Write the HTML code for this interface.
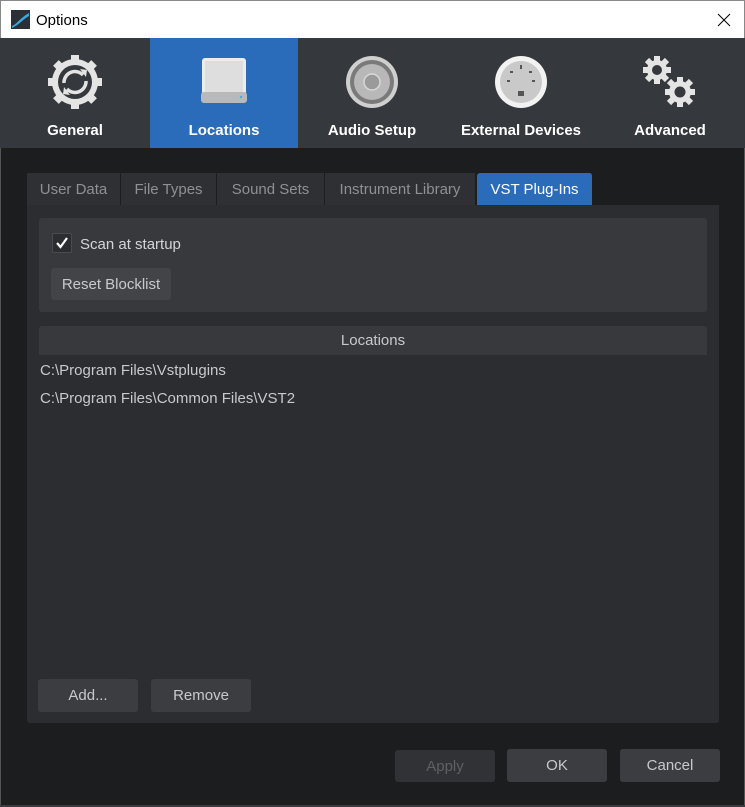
<!DOCTYPE html>
<html><head><meta charset="utf-8"><style>
*{box-sizing:border-box;margin:0;padding:0}
body{width:745px;height:807px;overflow:hidden;background:#1c1d1f;font-family:"Liberation Sans",sans-serif;position:relative}
.abs{position:absolute}
#title{left:0;top:0;width:745px;height:38px;background:#fff;border:1px solid #888;border-bottom:none}
#title span{position:absolute;left:35px;top:11px;font-size:15px;color:#000}
#tb{left:0;top:38px;width:745px;height:110px;background:#35383c}
.tool{position:absolute;top:0;height:110px;width:148px;text-align:center;color:#fff;font-weight:bold;font-size:15px}
.tool .lbl{position:absolute;left:0;right:0;top:84px}
.tool svg{position:absolute;left:50%;transform:translateX(-50%);top:14px}
.tab{position:absolute;top:173px;height:32px;background:#2f3033;color:#8e9094;font-size:15px;line-height:34px;text-align:center;border-right:1px solid #1c1d1f}
#panel{left:27px;top:205px;width:692px;height:518px;background:#2c2d30;border-radius:0 0 3px 3px}
.btn{position:absolute;background:#3c3d41;color:#c8c9cc;font-size:15px;text-align:center;border-radius:3px}
</style></head><body>
<div class="abs" style="left:0;top:0;width:1px;height:807px;background:#555"></div>
<div class="abs" style="right:0;top:0;width:1px;height:807px;background:#555"></div>
<div class="abs" style="left:0;bottom:0;width:745px;height:2px;background:#3a3b3e"></div>
<div id="title" class="abs">
<svg class="abs" style="left:10px;top:9px" width="19" height="19"><rect width="19" height="19" fill="#2b2f36"/><path d="M1 16 C6 14 9 8 18 3 L18 6 C11 10 8 15 1 18Z" fill="#38a9e0"/></svg>
<span>Options</span>
<svg class="abs" style="left:716px;top:12px" width="14" height="14"><path d="M1 1L13 13M13 1L1 13" stroke="#000" stroke-width="1"/></svg>
</div>
<div id="tb" class="abs">
<div class="tool" style="left:1px">
<svg width="60" height="60" viewBox="0 0 60 60"><g fill="#e4e4e4"><circle cx="30" cy="30" r="23"/>
<g><rect x="26" y="3" width="8" height="8"/><rect x="26" y="49" width="8" height="8"/><rect x="3" y="26" width="8" height="8"/><rect x="49" y="26" width="8" height="8"/>
<g transform="rotate(45 30 30)"><rect x="26" y="3" width="8" height="8"/><rect x="26" y="49" width="8" height="8"/><rect x="3" y="26" width="8" height="8"/><rect x="49" y="26" width="8" height="8"/></g></g></g>
<circle cx="30" cy="30" r="17" fill="#35383c"/>
<path d="M19 31a11 11 0 0 1 19-8" stroke="#e4e4e4" stroke-width="3.5" fill="none"/><path d="M41 29a11 11 0 0 1-19 8" stroke="#e4e4e4" stroke-width="3.5" fill="none"/>
<path d="M35 17l7 1-1 7z M25 43l-7-1 1-7z" fill="#e4e4e4"/></svg>
<div class="lbl">General</div></div>
<div class="tool" style="left:150px;background:#2a6cba">
<svg width="60" height="60" viewBox="0 0 60 60"><rect x="8" y="6" width="44" height="38" rx="3" fill="#ececec"/><rect x="11" y="9" width="38" height="31" fill="#dedede"/><rect x="7" y="40" width="46" height="11" rx="3" fill="#b9b9b9"/><circle cx="47" cy="45" r="1.2" fill="#4aa8f0"/></svg>
<div class="lbl">Locations</div></div>
<div class="tool" style="left:298px">
<svg width="60" height="60" viewBox="0 0 60 60"><circle cx="30" cy="30" r="26" fill="#cfcfcf"/><circle cx="30" cy="30" r="22" fill="#7a7a7a"/><circle cx="30" cy="30" r="18" fill="#b8b8b8"/><circle cx="30" cy="30" r="8" fill="#9a9a9a" stroke="#d8d8d8" stroke-width="1.5"/></svg>
<div class="lbl">Audio Setup</div></div>
<div class="tool" style="left:447px">
<svg width="60" height="60" viewBox="0 0 60 60"><circle cx="30" cy="30" r="26" fill="#f2f2f2"/><circle cx="30" cy="30" r="21" fill="#c9c9c9"/><g fill="#555"><rect x="29" y="13" width="2" height="4"/><rect x="19" y="19" width="3" height="2"/><rect x="38" y="19" width="3" height="2"/><rect x="16" y="28" width="3" height="2"/><rect x="41" y="28" width="3" height="2"/><rect x="27" y="39" width="6" height="5"/></g></svg>
<div class="lbl">External Devices</div></div>
<div class="tool" style="left:596px">
<svg width="60" height="60" viewBox="0 0 60 60"><g fill="#e4e4e4"><circle cx="17" cy="18" r="10"/><circle cx="40" cy="40" r="11"/>
<g stroke="#e4e4e4" stroke-width="6"><path d="M17 4v28M3 18h28M7 8l20 20M27 8L7 28"/><path d="M40 25v30M25 40h30M29 29l22 22M51 29L29 51"/></g></g>
<circle cx="17" cy="18" r="5" fill="#35383c"/><circle cx="40" cy="40" r="5.5" fill="#35383c"/></svg>
<div class="lbl">Advanced</div></div>
</div>
<div class="tab" style="left:27px;width:94px">User Data</div>
<div class="tab" style="left:121px;width:96px">File Types</div>
<div class="tab" style="left:217px;width:108px">Sound Sets</div>
<div class="tab" style="left:325px;width:151px">Instrument Library</div>
<div class="tab" style="left:477px;width:116px;background:#2a6cba;color:#fff;border-radius:3px 3px 0 0">VST Plug-Ins</div>
<div id="panel" class="abs"></div>
<div class="abs" style="left:39px;top:218px;width:668px;height:94px;background:#38393c;border-radius:3px"></div>
<div class="abs" style="left:52px;top:233px;width:20px;height:20px;border:1px solid #4a4b4f;border-radius:2px;background:#2c2d30"></div>
<svg class="abs" style="left:54px;top:235px" width="16" height="16"><path d="M3 8l3.5 4L13 3" stroke="#fff" stroke-width="2.2" fill="none"/></svg>
<div class="abs" style="left:80px;top:236px;font-size:15px;color:#d4d5d8">Scan at startup</div>
<div class="btn" style="left:51px;top:268px;width:120px;height:32px;line-height:34px;background:#434448">Reset Blocklist</div>
<div class="abs" style="left:39px;top:326px;width:668px;height:29px;background:#38393c;color:#c8c9cc;font-size:15px;text-align:center;line-height:30px;border-radius:3px 3px 0 0">Locations</div>
<div class="abs" style="left:40px;top:362px;font-size:15px;color:#c8c9cc">C:\Program Files\Vstplugins</div>
<div class="abs" style="left:40px;top:390px;font-size:15px;color:#c8c9cc">C:\Program Files\Common Files\VST2</div>
<div class="btn" style="left:38px;top:679px;width:100px;height:33px;line-height:34px">Add...</div>
<div class="btn" style="left:151px;top:679px;width:100px;height:33px;line-height:34px">Remove</div>
<div class="btn" style="left:395px;top:750px;width:100px;height:32px;line-height:33px;background:#313235;color:#5f6064">Apply</div>
<div class="btn" style="left:507px;top:749px;width:100px;height:33px;line-height:34px">OK</div>
<div class="btn" style="left:620px;top:749px;width:100px;height:33px;line-height:34px">Cancel</div>
</body></html>
